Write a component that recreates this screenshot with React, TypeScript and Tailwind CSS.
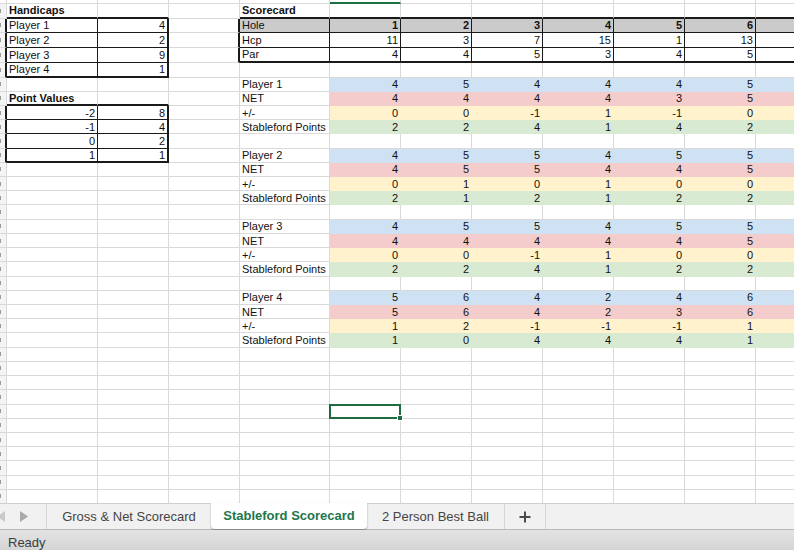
import React from 'react';

type Fill = 'blue' | 'red' | 'yellow' | 'green' | 'gray';
type Edge = 'g' | 'k' | 'K' | 'blue' | 'red' | 'yellow' | 'green';
type Cell = { v: string | number; bold?: boolean };

const WIDTHS = [
  'w-[7px]', 'w-[91px]', 'w-[71px]', 'w-[71px]', 'w-[90px]',
  'w-[71px]', 'w-[71px]', 'w-[71px]', 'w-[71px]', 'w-[71px]', 'w-[71px]', 'w-[71px]',
];

const RIGHT: Record<Edge, string> = {
  g: 'border-r border-r-[#d9d9d9]',
  k: 'border-r border-r-[#1a1a1a]',
  K: 'border-r-2 border-r-[#1a1a1a]',
  blue: 'border-r border-r-[#cfe2f3]',
  red: 'border-r border-r-[#f4cccc]',
  yellow: 'border-r border-r-[#fff2cc]',
  green: 'border-r border-r-[#d9ead3]',
};

const BOTTOM: Record<Edge, string> = {
  g: 'border-b border-b-[#d9d9d9]',
  k: 'border-b border-b-[#1a1a1a]',
  K: 'border-b-2 border-b-[#1a1a1a]',
  blue: 'border-b border-b-[#cfe2f3]',
  red: 'border-b border-b-[#f4cccc]',
  yellow: 'border-b border-b-[#fff2cc]',
  green: 'border-b border-b-[#d9ead3]',
};

const BG: Record<Fill, string> = {
  blue: 'bg-[#cfe2f3]',
  red: 'bg-[#f4cccc]',
  yellow: 'bg-[#fff2cc]',
  green: 'bg-[#d9ead3]',
  gray: 'bg-[#cbcbcb]',
};

// thick outlined ranges: rows / cols inclusive (col 1 = A)
const boxes = [
  { r1: 2, r2: 5, c1: 1, c2: 2, closed: true },
  { r1: 8, r2: 11, c1: 1, c2: 2, closed: true },
  { r1: 2, r2: 4, c1: 4, c2: 11, closed: false },
];

const players = [
  { name: 'Player 1', start: 6, rows: [[4, 5, 4, 4, 4, 5], [4, 4, 4, 4, 3, 5], [0, 0, -1, 1, -1, 0], [2, 2, 4, 1, 4, 2]] },
  { name: 'Player 2', start: 11, rows: [[4, 5, 5, 4, 5, 5], [4, 5, 5, 4, 4, 5], [0, 1, 0, 1, 0, 0], [2, 1, 2, 1, 2, 2]] },
  { name: 'Player 3', start: 16, rows: [[4, 5, 5, 4, 5, 5], [4, 4, 4, 4, 4, 5], [0, 0, -1, 1, 0, 0], [2, 2, 4, 1, 2, 2]] },
  { name: 'Player 4', start: 21, rows: [[5, 6, 4, 2, 4, 6], [5, 6, 4, 2, 3, 6], [1, 2, -1, -1, -1, 1], [1, 0, 4, 4, 4, 1]] },
];

const bands: Fill[] = ['blue', 'red', 'yellow', 'green'];
const ROW_COUNT = 35;
const SEL = { r: 29, c: 5 };

const rowHeight = (r: number) => (r === 1 ? 'h-[14.5px]' : r <= 5 ? 'h-[14.75px]' : 'h-[14.22px]');

const data: Record<string, Cell> = {};
const put = (r: number, c: number, v: string | number, bold = false) => {
  data[`${r}-${c}`] = { v, bold };
};

put(1, 1, 'Handicaps', true);
put(1, 4, 'Scorecard', true);
[4, 2, 9, 1].forEach((h, i) => {
  put(2 + i, 1, `Player ${i + 1}`);
  put(2 + i, 2, h);
});
put(7, 1, 'Point Values', true);
[[-2, 8], [-1, 4], [0, 2], [1, 1]].forEach(([a, b], i) => {
  put(8 + i, 1, a);
  put(8 + i, 2, b);
});
put(2, 4, 'Hole');
put(3, 4, 'Hcp');
put(4, 4, 'Par');
[1, 2, 3, 4, 5, 6].forEach((h, i) => put(2, 5 + i, h, true));
[11, 3, 7, 15, 1, 13].forEach((h, i) => put(3, 5 + i, h));
[4, 4, 5, 3, 4, 5].forEach((h, i) => put(4, 5 + i, h));
players.forEach((p) => {
  const labels = [p.name, 'NET', '+/-', 'Stableford Points'];
  p.rows.forEach((vals, j) => {
    put(p.start + j, 4, labels[j]);
    vals.forEach((v, i) => put(p.start + j, 5 + i, v));
  });
});

function fillOf(r: number, c: number): Fill | undefined {
  if (r === 2 && c >= 4) return 'gray';
  if (c < 5) return undefined;
  for (const p of players) {
    const k = r - p.start;
    if (k >= 0 && k < 4) return bands[k];
  }
  return undefined;
}

function rightEdge(r: number, c: number): Edge {
  for (const b of boxes) {
    const inRows = r >= b.r1 && r <= b.r2;
    if (inRows && c >= b.c1 && c <= b.c2) return c === b.c2 && b.closed ? 'K' : 'k';
    if (inRows && c === b.c1 - 1) return 'K';
  }
  const f = fillOf(r, c);
  return f && f !== 'gray' ? f : 'g';
}

function bottomEdge(r: number, c: number): Edge {
  for (const b of boxes) {
    const inCols = c >= b.c1 && c <= b.c2;
    if (inCols && r >= b.r1 && r <= b.r2) return r === b.r2 ? 'K' : 'k';
    if (inCols && r === b.r1 - 1) return 'K';
  }
  const f = fillOf(r, c);
  return f && f !== 'gray' ? f : 'g';
}

function SheetCell({ r, c }: { r: number; c: number }) {
  const cell = data[`${r}-${c}`];
  const fill = fillOf(r, c);
  const isNum = cell && typeof cell.v === 'number';
  const selected = r === SEL.r && c === SEL.c;

  if (c === 0) {
    // row numbers are scrolled off; only a sliver of each is left at the edge
    return (
      <div className={`${WIDTHS[0]} ${RIGHT[rightEdge(r, c)]} ${BOTTOM.g} shrink-0 bg-[#f4f4f4] flex items-center`}>
        <div className="w-[1px] h-[4px] bg-[#9a9a9a]" />
      </div>
    );
  }

  return (
    <div
      className={`${WIDTHS[c]} ${RIGHT[rightEdge(r, c)]} ${BOTTOM[bottomEdge(r, c)]} ${fill ? BG[fill] : 'bg-white'} ${
        isNum ? 'justify-end' : 'justify-start'
      } ${cell?.bold ? 'font-bold' : ''} ${selected ? 'relative' : ''} shrink-0 flex items-center pt-[1px] px-[2px] whitespace-nowrap`}
    >
      {cell ? cell.v : null}
      {selected && (
        <div className="absolute -inset-px border-2 border-[#1e6b41]">
          <div className="absolute -right-[4px] -bottom-[4px] w-[6px] h-[6px] bg-[#1e6b41] border border-white" />
        </div>
      )}
    </div>
  );
}

function Sheet() {
  const rows = Array.from({ length: ROW_COUNT }, (_, i) => i + 1);
  return (
    <div className="flex-1 overflow-hidden bg-white text-[11px] text-[#111] leading-[13px]">
      <div className="flex h-[4px]">
        {WIDTHS.map((w, c) => (
          <div
            key={c}
            className={`${w} shrink-0 border-r border-r-[#d9d9d9] ${
              c === 5 ? 'border-b-2 border-b-[#1e7145]' : 'border-b border-b-[#d9d9d9]'
            } bg-white`}
          />
        ))}
      </div>
      {rows.map((r) => (
        <div key={r} className={`flex ${rowHeight(r)}`}>
          {WIDTHS.map((_, c) => (
            <SheetCell key={c} r={r} c={c} />
          ))}
        </div>
      ))}
    </div>
  );
}

function Tabs() {
  return (
    <div className="h-[27px] shrink-0 flex items-stretch bg-[#f1f1f1] border-t border-t-[#cfcfcf] border-b border-b-[#b9b9b9] text-[13px] text-[#454545]">
      <div className="w-[47px] shrink-0 flex items-center border-r border-r-[#d6d6d6] overflow-hidden">
        <svg width="8" height="11" viewBox="0 0 8 11" className="-ml-[3px] shrink-0">
          <path d="M8 0 L0 5.5 L8 11 Z" fill="#c9c9c9" />
        </svg>
        <svg width="8" height="11" viewBox="0 0 8 11" className="ml-[15px] shrink-0">
          <path d="M0 0 L8 5.5 L0 11 Z" fill="#a9a9a9" />
        </svg>
      </div>
      <div className="w-[164px] shrink-0 flex items-center justify-center">Gross &amp; Net Scorecard</div>
      <div className="w-[156px] shrink-0 -mt-px flex items-center justify-center bg-white rounded-b-[4px] shadow-[0_1px_2px_rgba(0,0,0,0.35)] font-bold text-[#22764a]">
        Stableford Scorecard
      </div>
      <div className="w-[138px] shrink-0 flex items-center justify-center border-r border-r-[#d6d6d6]">2 Person Best Ball</div>
      <div className="w-[41px] shrink-0 flex items-center justify-center border-r border-r-[#d6d6d6]">
        <svg width="12" height="12" viewBox="0 0 12 12">
          <path d="M6 0.5 V11.5 M0.5 6 H11.5" stroke="#4a4a4a" strokeWidth="2" />
        </svg>
      </div>
      <div className="flex-1" />
    </div>
  );
}

export default function App() {
  return (
    <div className="w-[794px] h-[550px] flex flex-col overflow-hidden font-['Liberation_Sans',Arial,sans-serif]">
      <Sheet />
      <Tabs />
      <div className="h-[20px] shrink-0 flex items-end pl-[8px] bg-gradient-to-b from-[#e3e3e3] to-[#d5d5d5] text-[13px] leading-[15px] text-[#3c3c3c]">
        Ready
      </div>
    </div>
  );
}
